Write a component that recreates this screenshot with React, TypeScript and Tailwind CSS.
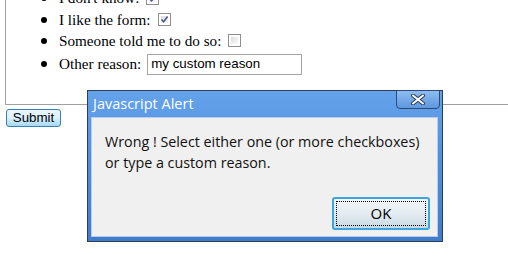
import React from "react";

const serif = { fontFamily: '"Liberation Serif", "Times New Roman", serif' };
const sans = { fontFamily: '"Liberation Sans", Arial, sans-serif' };
const ui = { fontFamily: '"Open Sans", "Noto Sans", sans-serif' };

function Checkbox({ checked }: { checked?: boolean }) {
  return (
    <span className="relative inline-block w-[13px] h-[13px] border border-[#8f8f8f] bg-white shrink-0">
      <span className="absolute inset-[2px] bg-gradient-to-br from-[#dcdcdc] to-[#fbfbfb]" />
      {checked && (
        <svg className="absolute left-0 top-0" width="11" height="11" viewBox="0 0 11 11">
          <path d="M2.5 5.5 L4.6 7.8 L8.6 2.6" fill="none" stroke="#4a5c8e" strokeWidth="1.7" />
        </svg>
      )}
    </span>
  );
}

function Row({ h, children }: { h: string; children: React.ReactNode }) {
  return (
    <div className={`flex items-center ${h}`}>
      <span className="ml-[35px] w-[6px] h-[6px] rounded-full bg-black shrink-0" />
      <div className="ml-[12px] flex items-center">{children}</div>
    </div>
  );
}

export default function App() {
  return (
    <div className="relative w-[508px] h-[267px] overflow-hidden bg-white">
      <div className="ml-[5px] mt-[-13px] h-[118px] border-l border-b border-[#a0a0a0] text-[15.2px] leading-[18px] text-black" style={serif}>
        <Row h="h-[22px]">
          <span>I don't know:</span>
          <span className="ml-[7px] flex"><Checkbox checked /></span>
        </Row>
        <Row h="h-[21px]">
          <span>I like the form:</span>
          <span className="ml-[7px] flex"><Checkbox checked /></span>
        </Row>
        <Row h="h-[21px]">
          <span>Someone told me to do so:</span>
          <span className="ml-[7px] flex"><Checkbox /></span>
        </Row>
        <Row h="h-[26px]">
          <span>Other reason:</span>
          <div
            className="ml-[6px] w-[155px] h-[21px] border border-[#a5a5a5] bg-white pl-[3px] flex items-center text-[13.33px] text-black"
            style={sans}
          >
            my custom reason
          </div>
        </Row>
      </div>

      <div
        className="ml-[6px] mt-[4px] w-[55px] h-[18px] rounded-[3px] border border-[#3c7fb1] bg-gradient-to-b from-[#eaf6fd] via-[#d9f0fc] to-[#a7d9f5] flex items-center justify-center text-[13.33px] text-black"
        style={sans}
      >
        Submit
      </div>

      {/* Alert dialog */}
      <div
        className="absolute left-[87px] top-[90px] w-[356px] h-[152px] border border-[#2f3c4e] bg-gradient-to-b from-[#64a2eb] via-[#4e8ddc] to-[#3f7ccd] flex flex-col"
        style={ui}
      >
        <div className="h-[26px] flex items-center pl-[5px] text-white text-[14.5px] leading-none">
          Javascript Alert
        </div>
        <div className="absolute right-[2px] top-[-1px] w-[44px] h-[19px] rounded-b-[4px] border border-[#2c4a78] bg-gradient-to-b from-[#8dbcf0] to-[#5f98de] flex items-center justify-center">
          <svg width="16" height="11" viewBox="0 0 16 11">
            <path d="M3 1.5 L13 9.5 M13 1.5 L3 9.5" stroke="#2d3f5e" strokeWidth="4" strokeLinecap="round" />
            <path d="M3 1.5 L13 9.5 M13 1.5 L3 9.5" stroke="#ffffff" strokeWidth="2" strokeLinecap="round" />
          </svg>
        </div>
        <div className="ml-[3px] mr-[4px] h-[120px] bg-[#f0f0f0] border border-[#b9cde6] flex flex-col">
          <div className="pl-[13px] pt-[13px] text-[14.3px] leading-[21px] text-[#111]">
            Wrong ! Select either one (or more checkboxes)
            <br />
            or type a custom reason.
          </div>
          <div className="mt-auto self-end mr-[7px] mb-[6px] relative w-[98px] h-[33px] rounded-[3px] border-2 border-[#3aa6dd] bg-gradient-to-b from-[#f2f5f7] via-[#e4ecf1] to-[#c9d9e3] flex items-center justify-center text-[15px] text-black">
            <span className="absolute inset-[2px] border border-dotted border-black" />
            OK
          </div>
        </div>
      </div>
    </div>
  );
}
